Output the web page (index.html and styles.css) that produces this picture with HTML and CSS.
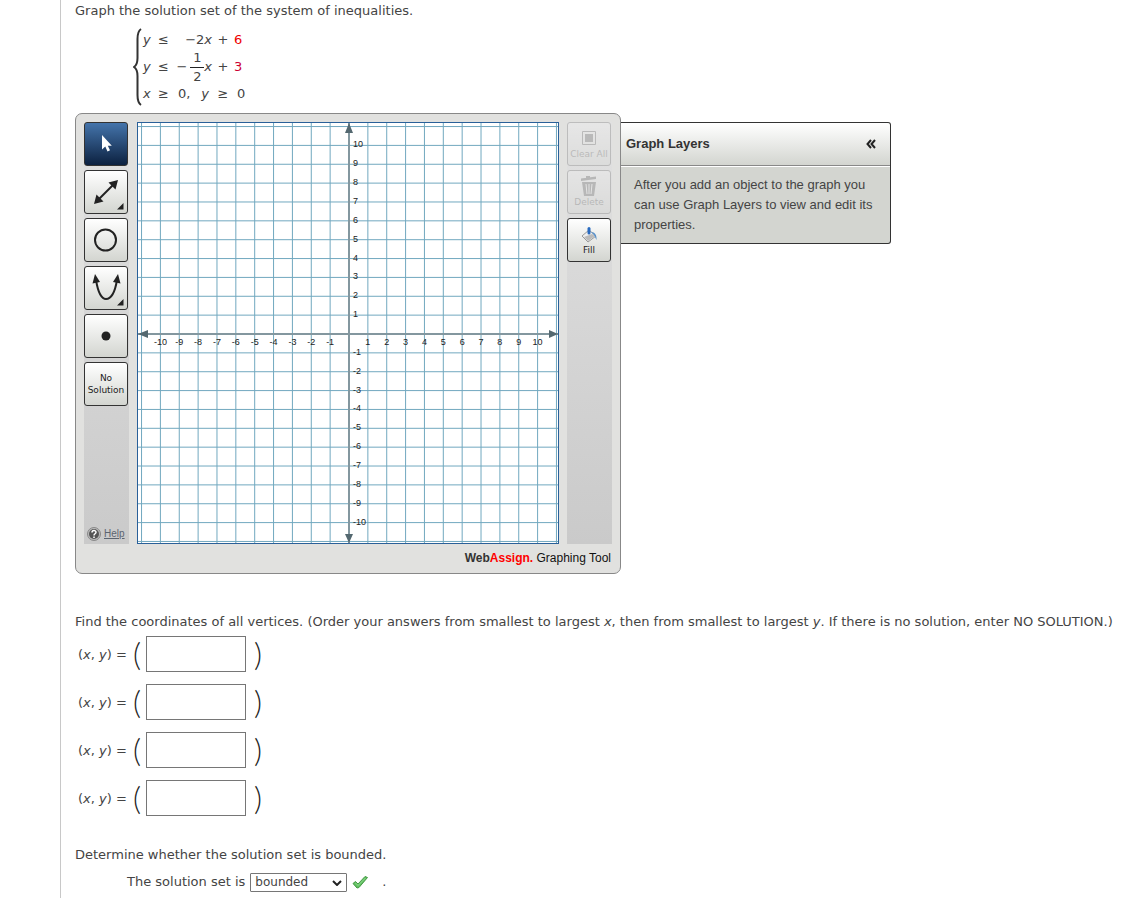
FILE: index.html
```html
<!DOCTYPE html>
<html lang="en">
<head>
    <meta charset="UTF-8">
    <meta name="viewport" content="width=device-width, initial-scale=1.0">
    <title>Systems of Inequalities</title>
    <link rel="stylesheet" href="styles.css">
</head>
<body>
    <main class="question">
        <p class="prompt">Graph the solution set of the system of inequalities.</p>

        <div class="system">
            <svg class="brace" viewBox="0 0 10 78" aria-hidden="true">
                <path d="M8 1C5 3 4.500 6 4.500 11V30C4.500 35 3.500 37.500 1 39C3.500 40.500 4.500 43 4.500 48V67C4.500 72 5 75 8 77"/>
            </svg>
            <div class="equations">
                <div class="equation">
                    <i>y</i><span>≤</span><span class="term">−2<i>x</i></span><span class="op">+</span><span class="red">6</span>
                </div>
                <div class="equation tall">
                    <i>y</i><span>≤</span>
                    <span class="term"><span class="minus">−</span><span class="fraction"><span>1</span><span>2</span></span><i>x</i></span>
                    <span class="op">+</span><span class="crimson">3</span>
                </div>
                <div class="equation">
                    <i>x</i><span>≥</span><span class="term pair"><span>0,</span><i>y</i></span><span class="op">≥</span><span class="last">0</span>
                </div>
            </div>
        </div>

        <div class="graph-area">
            <section class="graph-tool">
                <div class="workspace">
                    <div class="toolbar">
                        <button type="button" class="tool active" aria-label="Select">
                            <svg viewBox="0 0 42 42"><path fill="#fff" d="M17 12V26.500L20.300 23.600L22.500 28.500L25 27.300L22.800 22.700H26.800Z"/></svg>
                        </button>
                        <button type="button" class="tool" aria-label="Line">
                            <svg viewBox="0 0 42 42">
                                <path class="stroke" d="M13 29L29 13"/>
                                <path d="M9 33L11.500 23.500L18.500 30.500ZM33 9L23.500 11.500L30.500 18.500ZM38.500 32V38.500H32Z"/>
                            </svg>
                        </button>
                        <button type="button" class="tool" aria-label="Circle">
                            <svg viewBox="0 0 42 42"><circle class="stroke" cx="20.500" cy="21" r="10.500"/></svg>
                        </button>
                        <button type="button" class="tool" aria-label="Parabola">
                            <svg viewBox="0 0 42 42">
                                <path class="stroke" d="M11 13C13 25 16 32 21 32S30 25 32 13"/>
                                <path d="M10 7L7.500 16.500L15 15ZM33 7L28 15L35.500 16.500ZM38.500 32V38.500H32Z"/>
                            </svg>
                        </button>
                        <button type="button" class="tool" aria-label="Point">
                            <svg viewBox="0 0 42 42"><circle cx="21" cy="21" r="4.500"/></svg>
                        </button>
                        <button type="button" class="tool">No Solution</button>
                        <a class="help" href="#">
                            <svg viewBox="0 0 14 14" aria-hidden="true">
                                <circle cx="7" cy="7" r="6.500" fill="#bbb" stroke="#888"/>
                                <circle cx="7" cy="7" r="5" fill="#555"/>
                                <path d="M5 5.500C5 3 9 3 9 5.300C9 6.800 7 6.700 7 8.500M7 9.500V11" fill="none" stroke="#fff" stroke-width="1.500"/>
                            </svg>
                            <span>Help</span>
                        </a>
                    </div>

                    <svg class="grid" id="grid" viewBox="0 0 420 420" role="img" aria-label="Coordinate plane"></svg>

                    <div class="toolbar">
                        <button type="button" class="tool labelled" disabled>
                            <svg viewBox="0 0 24 20"><path class="thin" d="M5.500 3.500H18.500V16.500H5.500Z"/><path d="M8 6H16V14H8Z"/></svg>
                            Clear All
                        </button>
                        <button type="button" class="tool labelled" disabled>
                            <svg viewBox="0 0 24 20">
                                <path d="M4 2.500L19 0.500V3L4 5ZM9 0H13V2H9ZM5 6H19L17 20H7Z"/>
                                <path d="M9 8L10 18M12 8V18M15 8L14 18" stroke="#fff"/>
                            </svg>
                            Delete
                        </button>
                        <button type="button" class="tool labelled">
                            <svg viewBox="0 0 24 20">
                                <path d="M5 12L12 6L19 12L11 18Z" fill="#eee" stroke="#999"/>
                                <path d="M7 13L11 17L18 12L15 10Z" fill="#bbb"/>
                                <path d="M12 9V4.500" stroke="#286ac0" stroke-width="3" stroke-linecap="round"/>
                                <path d="M14 8C18 8 20 11 19.500 16L17 11Z" fill="#5a91c9"/>
                            </svg>
                            Fill
                        </button>
                    </div>
                </div>
                <p class="brand"><b>Web<span>Assign.</span></b> Graphing Tool</p>
            </section>

            <aside class="layers">
                <header>
                    <h2>Graph Layers</h2>
                    <button type="button" class="collapse" aria-label="Collapse">
                        <svg viewBox="0 0 10 10"><path d="M5 1L1.500 5L5 9M9 1L5.500 5L9 9"/></svg>
                    </button>
                </header>
                <p>After you add an object to the graph you can use Graph Layers to view and edit its properties.</p>
            </aside>
        </div>

        <p class="prompt">Find the coordinates of all vertices. (Order your answers from smallest to largest <i>x</i>, then from smallest to largest <i>y</i>. If there is no solution, enter NO SOLUTION.)</p>

        <div class="answers">
            <div class="answer">
                <label for="v1">(<i>x</i>, <i>y</i>) =</label><span class="paren">(</span><input type="text" id="v1"><span class="paren close">)</span>
            </div>
            <div class="answer">
                <label for="v2">(<i>x</i>, <i>y</i>) =</label><span class="paren">(</span><input type="text" id="v2"><span class="paren close">)</span>
            </div>
            <div class="answer">
                <label for="v3">(<i>x</i>, <i>y</i>) =</label><span class="paren">(</span><input type="text" id="v3"><span class="paren close">)</span>
            </div>
            <div class="answer">
                <label for="v4">(<i>x</i>, <i>y</i>) =</label><span class="paren">(</span><input type="text" id="v4"><span class="paren close">)</span>
            </div>
        </div>

        <p class="prompt">Determine whether the solution set is bounded.</p>
        <div class="bounded">
            <label for="bounded">The solution set is</label>
            <div class="select">
                <select id="bounded">
                    <option>---Select---</option>
                    <option selected>bounded</option>
                    <option>not bounded</option>
                </select>
                <svg viewBox="0 0 10 6" aria-hidden="true"><path d="M1 1L5 5L9 1"/></svg>
            </div>
            <svg class="check" viewBox="0 0 16 14" role="img" aria-label="Correct">
                <path d="M1 8.500L3.500 6.500L6 9L13 1.500L15.500 2.500L7 12.500L5 13Z" fill="#5fbf5f" stroke="#459a45"/>
                <path d="M3.500 8L6 10.500L13.500 3" fill="none" stroke="#90da90"/>
            </svg>
            <span>.</span>
        </div>
    </main>

    <script>
        const grid = document.getElementById('grid');
        const center = 211;
        const step = 18.86;
        let lines = '';
        let labels = '';

        for (let i = -11; i <= 11; i++) {
            const x = center + i * step;
            const y = center - i * step;
            if (i === 0) continue;

            lines += `M${x} 0V420M0 ${y}H420`;

            // the outermost lines have no number
            if (Math.abs(i) < 11) {
                labels += `<text x="${x}" y="222" text-anchor="middle">${i}</text>`;
                labels += `<text x="215" y="${y + 2}">${i}</text>`;
            }
        }

        grid.innerHTML = `
            <path class="lines" d="${lines}"/>
            <path class="axes" d="M211 0V420M0 211H420"/>
            <path class="arrows" d="M211 0L215 10H207ZM211 420L215 411H207ZM0 211L10 207V215ZM420 211L411 207V215Z"/>
            ${labels}`;
    </script>
</body>
</html>
```
FILE: styles.css
```css
* {
    margin: 0;
    padding: 0;
    box-sizing: border-box;
}

body {
    font-family: Verdana, 'DejaVu Sans', sans-serif;
    font-size: 13px;
    line-height: 20px;
    color: #444;
    background: #fff;
}

button, input, select {
    font: inherit;
    color: inherit;
}

svg {
    display: block;
}

.question {
    min-height: 100vh;
    margin-left: 60px;
    padding: 1px 0 5px 14px;
    border-left: 1px solid #c8c8c8;
}

/* system of inequalities */
.system {
    display: flex;
    margin: 7px 0 7px 58px;
}

.brace {
    width: 10px;
    height: 78px;
    fill: none;
    stroke: #333;
    stroke-width: 2;
}

.equation {
    display: grid;
    grid-template-columns: 15px 18px 36px 22px 14px;
    align-items: center;
    height: 24px;
}

/* the fraction is taller than its row */
.equation.tall {
    grid-template-rows: 30px;
    height: 30px;
}

.term {
    display: flex;
    justify-content: flex-end;
    align-items: center;
}

.term.pair {
    justify-content: space-between;
    padding: 0 3px 0 2px;
}

.minus {
    margin-right: 3px;
}

.fraction {
    width: 14px;
    text-align: center;
    line-height: 18px;
}

.fraction span {
    display: block;
}

.fraction span:first-child {
    border-bottom: 1px solid #222;
}

.op {
    text-align: center;
}

.last {
    padding-left: 3px;
}

.red {
    color: #e00;
}

.crimson {
    color: #c03;
}

/* graphing tool */
.graph-area {
    display: flex;
    align-items: flex-start;
    margin-bottom: 38px;
}

.graph-tool {
    padding: 8px 8px 0;
    background: #e1e1df;
    border: 1px solid #888;
    border-radius: 7px;
}

.workspace {
    display: flex;
    gap: 8px;
}

.toolbar {
    display: flex;
    flex-direction: column;
    gap: 4px;
    width: 45px;
    background: linear-gradient(#e1e1e1, #cacaca);
}

.tool {
    width: 44px;
    height: 44px;
    background: linear-gradient(#fff, #d3d5d0);
    border: 1px solid #333;
    border-radius: 3px;
    color: #222;
    fill: #222;
    font-size: 9px;
    line-height: 12px;
}

.tool.active {
    background: linear-gradient(#4474ab, #0c2140);
}

.tool .stroke {
    fill: none;
    stroke: #222;
    stroke-width: 2;
}

.tool .thin {
    fill: none;
    stroke: #222;
}

.tool.labelled {
    white-space: nowrap;
}

.tool.labelled svg {
    width: 24px;
    height: 20px;
    margin: 0 auto;
}

.tool:disabled {
    opacity: 0.2;
}

.help {
    display: flex;
    align-items: center;
    gap: 3px;
    margin-top: auto;
    padding-left: 3px;
    color: #5c6470;
    font: 10px/20px 'Liberation Sans', Arial, sans-serif;
}

.help svg {
    width: 14px;
    height: 14px;
}

.grid {
    width: 422px;
    height: 422px;
    background: #fff;
    border: 1px solid #2a6099;
    font: 9px 'Liberation Sans', Arial, sans-serif;
    fill: #222;
}

.grid .lines {
    fill: none;
    stroke: #71a8bf;
}

.grid .axes {
    stroke: #83979f;
    stroke-width: 2;
}

.grid .arrows {
    fill: #546870;
}

.brand {
    padding-right: 1px;
    color: #111;
    font: 12px/29px 'Liberation Sans', Arial, sans-serif;
    text-align: right;
}

.brand b {
    color: #333;
}

.brand b span {
    color: #f00;
}

.layers {
    width: 270px;
    margin-top: 9px;
    background: #d3d5d0;
    border: 1px solid #333;
    border-left: 0;
    border-radius: 0 3px 3px 0;
    font: 13px/20px 'Liberation Sans', Arial, sans-serif;
}

.layers header {
    display: flex;
    justify-content: space-between;
    align-items: center;
    height: 43px;
    padding: 0 14px 0 5px;
    background: linear-gradient(#fff, #d3d5d0);
    border-bottom: 1px solid #888;
    border-radius: 0 3px 0 0;
}

.layers h2 {
    color: #333;
    font-size: 13px;
}

.layers p {
    padding: 8px 14px 8px 13px;
    border-top: 1px solid #fff;
}

.collapse {
    background: none;
    border: 0;
}

.collapse svg {
    width: 10px;
    height: 10px;
    fill: none;
    stroke: #222;
    stroke-width: 2;
}

/* vertices */
.answers {
    display: flex;
    flex-direction: column;
    gap: 12px;
    margin: 4px 0 29px 3px;
}

.answer {
    display: flex;
    align-items: center;
}

.answer label {
    width: 55px;
    padding-top: 2px;
}

.paren {
    width: 13px;
    color: #222;
    font: 300 31px/32px Lato, sans-serif;
}

.paren.close {
    margin-left: 8px;
}

.answer input {
    width: 100px;
    height: 36px;
    padding: 0 6px;
    border: 1px solid #767676;
}

/* bounded or not */
.bounded {
    display: flex;
    align-items: center;
    gap: 5px;
    margin: 7px 0 0 52px;
}

.select {
    position: relative;
}

.select select {
    display: block;
    width: 97px;
    height: 19px;
    padding-left: 4px;
    background: #fff;
    border: 1px solid #767676;
    border-radius: 1px;
    font-size: 12px;
    line-height: 17px;
    appearance: none;
}

.select svg {
    position: absolute;
    top: 7px;
    right: 5px;
    width: 10px;
    height: 6px;
    fill: none;
    stroke: #222;
    stroke-width: 2;
    pointer-events: none;
}

.check {
    width: 16px;
    height: 14px;
    margin-right: 9px;
}
```
